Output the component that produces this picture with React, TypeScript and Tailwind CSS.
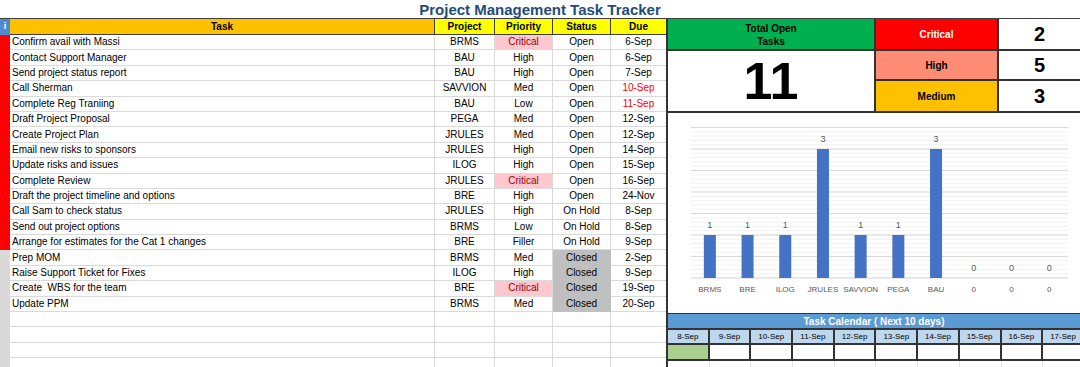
import React from 'react';

type Task = {
  name: string;
  project: string;
  priority: string;
  status: string;
  due: string;
  late?: boolean;
};

const tasks: Task[] = [
  { name: 'Confirm avail with Massi', project: 'BRMS', priority: 'Critical', status: 'Open', due: '6-Sep' },
  { name: 'Contact Support Manager', project: 'BAU', priority: 'High', status: 'Open', due: '6-Sep' },
  { name: 'Send project status report', project: 'BAU', priority: 'High', status: 'Open', due: '7-Sep' },
  { name: 'Call Sherman', project: 'SAVVION', priority: 'Med', status: 'Open', due: '10-Sep', late: true },
  { name: 'Complete Reg Traniing', project: 'BAU', priority: 'Low', status: 'Open', due: '11-Sep', late: true },
  { name: 'Draft Project Proposal', project: 'PEGA', priority: 'Med', status: 'Open', due: '12-Sep' },
  { name: 'Create Project Plan', project: 'JRULES', priority: 'Med', status: 'Open', due: '12-Sep' },
  { name: 'Email new risks to sponsors', project: 'JRULES', priority: 'High', status: 'Open', due: '14-Sep' },
  { name: 'Update risks and issues', project: 'ILOG', priority: 'High', status: 'Open', due: '15-Sep' },
  { name: 'Complete Review', project: 'JRULES', priority: 'Critical', status: 'Open', due: '16-Sep' },
  { name: 'Draft the project timeline and options', project: 'BRE', priority: 'High', status: 'Open', due: '24-Nov' },
  { name: 'Call Sam to check status', project: 'JRULES', priority: 'High', status: 'On Hold', due: '8-Sep' },
  { name: 'Send out project options', project: 'BRMS', priority: 'Low', status: 'On Hold', due: '8-Sep' },
  { name: 'Arrange for estimates for the Cat 1 changes', project: 'BRE', priority: 'Filler', status: 'On Hold', due: '9-Sep' },
  { name: 'Prep MOM', project: 'BRMS', priority: 'Med', status: 'Closed', due: '2-Sep' },
  { name: 'Raise Support Ticket for Fixes', project: 'ILOG', priority: 'High', status: 'Closed', due: '9-Sep' },
  { name: 'Create  WBS for the team', project: 'BRE', priority: 'Critical', status: 'Closed', due: '19-Sep' },
  { name: 'Update PPM', project: 'BRMS', priority: 'Med', status: 'Closed', due: '20-Sep' },
];

const chartData = [
  { label: 'BRMS', value: 1 },
  { label: 'BRE', value: 1 },
  { label: 'ILOG', value: 1 },
  { label: 'JRULES', value: 3 },
  { label: 'SAVVION', value: 1 },
  { label: 'PEGA', value: 1 },
  { label: 'BAU', value: 3 },
  { label: '0', value: 0 },
  { label: '0', value: 0 },
  { label: '0', value: 0 },
];

const calendarDays = ['8-Sep', '9-Sep', '10-Sep', '11-Sep', '12-Sep', '13-Sep', '14-Sep', '15-Sep', '16-Sep', '17-Sep'];

const EMPTY_ROWS = 4;

const TaskTable: React.FC = () => {
  return (
    <div className="flex w-[666px] shrink-0">
      {/* flag strip */}
      <div className="flex w-[10px] flex-col">
        <div className="flex h-[16px] items-center justify-center bg-[#4f8ad0] text-[9px] font-bold text-white">i</div>
        {tasks.slice(0, 14).map((t) => (
          <div key={t.name} className="relative h-[15.4px] bg-[#ff0000]">
            <span className="absolute left-[5px] top-[9px] h-px w-px bg-black" />
          </div>
        ))}
        <div className="flex-1 bg-[#d9d9d9]" />
      </div>

      <div className="flex flex-1 flex-col text-[10px] leading-none text-black">
        <div className="flex h-[16px] font-bold">
          <div className="flex w-[425px] items-center justify-center border-r border-b border-[#404040] bg-[#ffc000]">Task</div>
          <div className="flex w-[60px] items-center justify-center border-r border-b border-[#404040] bg-[#ffff00]">Project</div>
          <div className="flex w-[58px] items-center justify-center border-r border-b border-[#404040] bg-[#ffff00]">Priority</div>
          <div className="flex w-[58px] items-center justify-center border-r border-b border-[#404040] bg-[#ffff00]">Status</div>
          <div className="flex flex-1 items-center justify-center border-b border-[#404040] bg-[#ffff00]">Due</div>
        </div>

        {tasks.map((t) => {
          const critical = t.priority === 'Critical';
          const closed = t.status === 'Closed';
          return (
            <div key={t.name} className="flex h-[15.4px]">
              <div className="flex w-[425px] items-center whitespace-pre border-r border-b border-[#dadada] pl-[2px]">{t.name}</div>
              <div className="flex w-[60px] items-center justify-center border-r border-b border-[#dadada]">{t.project}</div>
              <div
                className={`flex w-[58px] items-center justify-center border-r border-b border-[#dadada] ${
                  critical ? 'bg-[#ffc7ce] text-[#9c0006]' : ''
                }`}
              >
                {t.priority}
              </div>
              <div
                className={`flex w-[58px] items-center justify-center border-r border-b ${
                  closed ? 'border-[#bfbfbf] bg-[#bfbfbf]' : 'border-[#dadada]'
                }`}
              >
                {t.status}
              </div>
              <div className={`flex flex-1 items-center justify-center border-b border-[#dadada] ${t.late ? 'text-[#ff0000]' : ''}`}>
                {t.due}
              </div>
            </div>
          );
        })}

        {Array.from({ length: EMPTY_ROWS }).map((_, i) => (
          <div key={i} className="flex h-[15.4px] shrink-0">
            <div className="w-[425px] border-r border-b border-[#dadada]" />
            <div className="w-[60px] border-r border-b border-[#dadada]" />
            <div className="w-[58px] border-r border-b border-[#dadada]" />
            <div className="w-[58px] border-r border-b border-[#dadada]" />
            <div className="flex-1 border-b border-[#dadada]" />
          </div>
        ))}
      </div>
    </div>
  );
};

const Summary: React.FC = () => {
  return (
    <div className="flex h-[94px] border-b-2 border-[#333]">
      <div className="flex w-[208px] flex-col border-r-2 border-[#333]">
        <div className="flex h-[32px] flex-col items-center justify-center border-b-2 border-[#333] bg-[#00b050] pt-px text-[10px] font-bold leading-[13px]">
          <span>Total Open</span>
          <span>Tasks</span>
        </div>
        <div className="flex flex-1 items-center justify-center text-[52px] font-bold leading-none">11</div>
      </div>
      <div className="flex w-[123px] flex-col border-r-2 border-[#333] text-[10px] font-bold">
        <div className="flex h-[32px] items-center justify-center border-b-2 border-[#333] bg-[#ff0000] text-white">Critical</div>
        <div className="flex h-[30px] items-center justify-center border-b-2 border-[#333] bg-[#ff8c74]">High</div>
        <div className="flex flex-1 items-center justify-center bg-[#ffc000]">Medium</div>
      </div>
      <div className="flex flex-1 flex-col text-[20px] font-bold leading-none">
        <div className="flex h-[32px] items-center justify-center border-b-2 border-[#333]">2</div>
        <div className="flex h-[30px] items-center justify-center border-b-2 border-[#333]">5</div>
        <div className="flex flex-1 items-center justify-center">3</div>
      </div>
    </div>
  );
};

const ProjectChart: React.FC = () => {
  const left = 23;
  const right = 400;
  const base = 165;
  const unit = 43;
  const step = (right - left) / chartData.length;
  const minor = Array.from({ length: 36 }, (_, i) => base - i * (unit / 10));
  const major = Array.from({ length: 8 }, (_, i) => base - i * (unit / 2));

  return (
    <div className="h-[200px]">
      <svg width="412" height="200" viewBox="0 0 412 200" className="block">
        {minor.map((y, i) => (
          <line key={`m${i}`} x1={left} x2={right} y1={y} y2={y} stroke="#f1f1f1" strokeWidth="1" />
        ))}
        {major.map((y, i) => (
          <line key={`M${i}`} x1={left} x2={right} y1={y} y2={y} stroke="#d9d9d9" strokeWidth="1" />
        ))}
        {chartData.map((d, i) => {
          const cx = left + step * (i + 0.5);
          const h = d.value * unit;
          return (
            <g key={i}>
              {h > 0 && <rect x={cx - 6} y={base - h} width="12" height={h} fill="#4472c4" />}
              <text x={cx} y={base - h - 7} textAnchor="middle" fontSize="9" fill="#595959">
                {d.value}
              </text>
              <text x={cx} y={base + 14} textAnchor="middle" fontSize="8" fill="#595959">
                {d.label}
              </text>
            </g>
          );
        })}
      </svg>
    </div>
  );
};

const TaskCalendar: React.FC = () => {
  return (
    <div className="flex flex-col overflow-hidden">
      <div className="flex h-[15px] items-center justify-center border-t border-[#333] bg-[#5b9bd5] text-[10px] font-bold text-white">
        Task Calendar ( Next 10 days)
      </div>
      <div className="flex w-[420px] border-y-2 border-[#333] bg-[#bdd7ee]">
        {calendarDays.map((d) => (
          <div key={d} className="flex h-[13px] w-[41.7px] shrink-0 items-center justify-center border-r-2 border-[#333] text-[8px]">
            {d}
          </div>
        ))}
      </div>
      <div className="flex w-[420px] border-b-2 border-[#333]">
        {calendarDays.map((d, i) => (
          <div
            key={d}
            className={`h-[14px] w-[41.7px] shrink-0 border-r-2 border-[#333] ${i === 0 ? 'bg-[#a9d08e]' : 'bg-white'}`}
          />
        ))}
      </div>
      <div className="flex w-[420px]">
        {calendarDays.map((d) => (
          <div key={d} className="h-[10px] w-[41.7px] shrink-0 border-r border-[#e0e0e0]" />
        ))}
      </div>
    </div>
  );
};

export default function App() {
  return (
    <div className="h-[367px] w-[1080px] overflow-hidden bg-white font-['Liberation_Sans',Arial,sans-serif] text-black">
      <div className="flex h-[18px] items-center justify-center pt-px text-[15px] font-bold leading-none text-[#1f4e79]">
        Project Management Task Tracker
      </div>
      <div className="flex border-t border-[#404040]">
        <TaskTable />
        <div className="flex w-[414px] flex-col border-l-2 border-[#333]">
          <Summary />
          <ProjectChart />
          <TaskCalendar />
        </div>
      </div>
    </div>
  );
}
